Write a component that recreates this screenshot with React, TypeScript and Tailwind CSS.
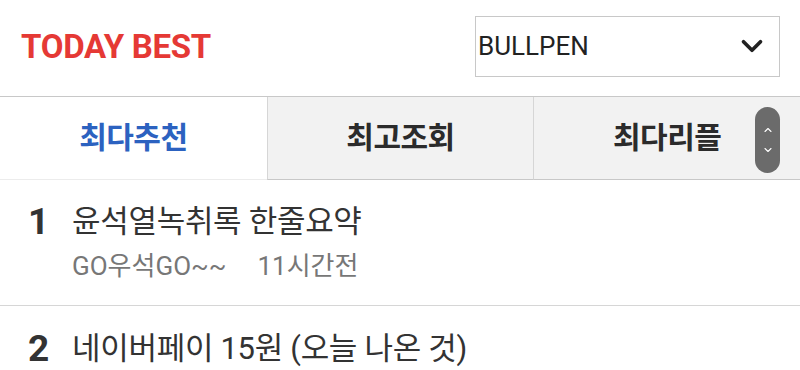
import { ChevronDown, ChevronUp } from "lucide-react";

const font = { fontFamily: '"Roboto", "Noto Sans CJK KR", sans-serif' };

const tabs = [
    { label: "최다추천", active: true },
    { label: "최고조회", active: false },
    { label: "최다리플", active: false },
];

const items = [
    { rank: 1, title: "윤석열녹취록 한줄요약", author: "GO우석GO~~", time: "11시간전" },
    { rank: 2, title: "네이버페이 15원 (오늘 나온 것)", author: "", time: "" },
];

export default function App() {
    return (
        <main className="w-[800px] h-[370px] overflow-hidden bg-white" style={font}>
            {/* Header */}
            <div className="h-[96px] flex items-center justify-between pl-[21px] pr-[20px]">
                <h1 className="text-[33px] font-bold text-[#e53935] tracking-[-0.3px] -mt-[2px]">TODAY BEST</h1>
                <div className="w-[305px] h-[61px] border-[1.5px] border-[#c8c8c8] flex items-center justify-between pl-[2px] pr-[10px] -mt-[4px]">
                    <span className="text-[26px] text-[#222]">BULLPEN</span>
                    <ChevronDown className="w-[34px] h-[34px] text-[#222]" strokeWidth={2.6} />
                </div>
            </div>

            {/* Tabs */}
            <div className="relative grid grid-cols-3 h-[84px] border-t-[1.5px] border-[#c8c8c8]">
                {tabs.map((t) => (
                    <div
                        key={t.label}
                        className={
                            t.active
                                ? "flex items-center justify-center bg-white border-b border-[#ececec]"
                                : "flex items-center justify-center bg-[#f2f2f2] border-b-[1.5px] border-[#c8c8c8] border-l border-l-[#d6d6d6]"
                        }
                    >
                        <span className={(t.active ? "text-[#2c62c0]" : "text-[#2b2b2b]") + " text-[30px] font-bold tracking-[-0.5px] -mt-[2px]"}>
                            {t.label}
                        </span>
                    </div>
                ))}
                {/* scroll indicator */}
                <div className="absolute right-[20px] top-[10px] w-[25px] h-[66px] rounded-full bg-[#6b6b6b] flex flex-col items-center justify-center gap-[8px]">
                    <ChevronUp className="w-[12px] h-[12px] text-white" strokeWidth={2.2} />
                    <ChevronDown className="w-[12px] h-[12px] text-white" strokeWidth={2.2} />
                </div>
            </div>

            {/* List */}
            <ul>
                {items.map((it) => (
                    <li
                        key={it.rank}
                        className={
                            "flex pl-[28px] border-b-[1.5px] border-[#d6d6d6] " +
                            (it.author ? "pt-[20px] pb-[21px]" : "pt-[21px] pb-[20px]")
                        }
                    >
                        <span className="w-[44px] shrink-0 text-[37px] font-bold text-[#333] leading-[44px]">{it.rank}</span>
                        <div>
                            <p className="text-[31px] text-[#333] leading-[44px] tracking-[-0.3px]">{it.title}</p>
                            {it.author && (
                                <p className="text-[26px] text-[#777] leading-[36px] mt-[4px] flex gap-[31px]">
                                    <span>{it.author}</span>
                                    <span>{it.time}</span>
                                </p>
                            )}
                        </div>
                    </li>
                ))}
            </ul>
        </main>
    );
}
